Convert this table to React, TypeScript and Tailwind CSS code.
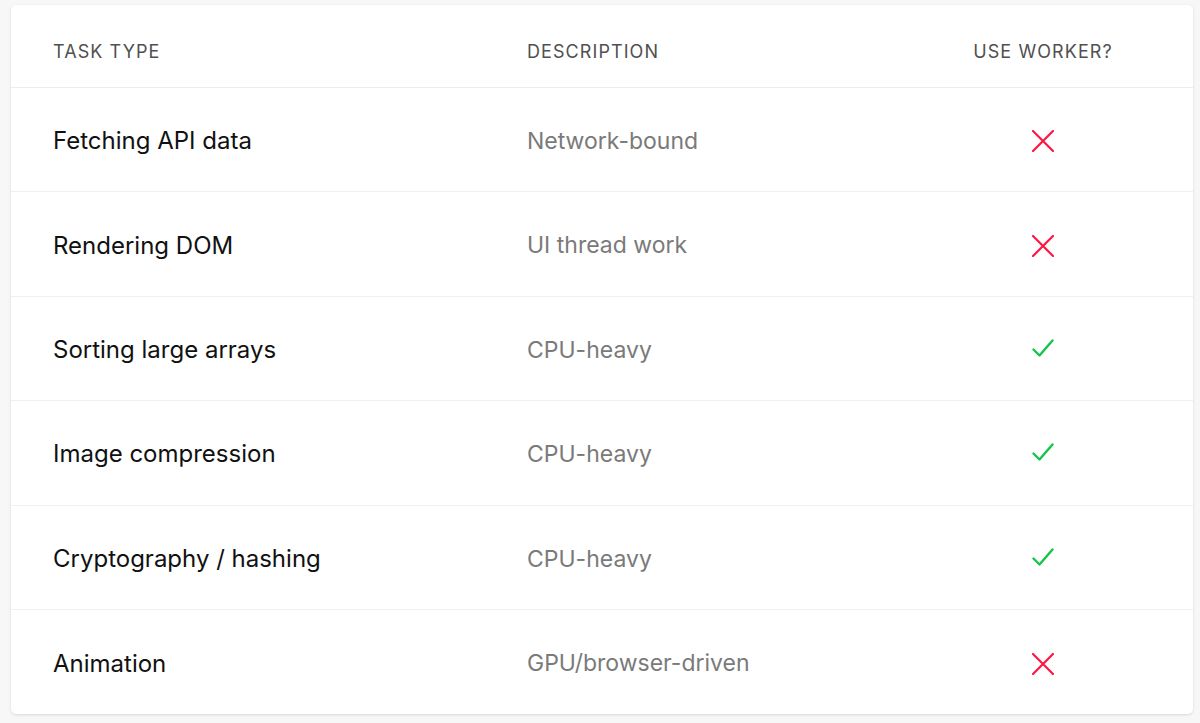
const ROWS = [
  { task: 'Fetching API data', desc: 'Network-bound', ok: false },
  { task: 'Rendering DOM', desc: 'UI thread work', ok: false },
  { task: 'Sorting large arrays', desc: 'CPU-heavy', ok: true },
  { task: 'Image compression', desc: 'CPU-heavy', ok: true },
  { task: 'Cryptography / hashing', desc: 'CPU-heavy', ok: true },
  { task: 'Animation', desc: 'GPU/browser-driven', ok: false },
];

function Cross() {
  return (
    <svg width="22" height="22" viewBox="0 0 22 22" fill="none">
      <path d="M1 1L21 21M21 1L1 21" stroke="#ff1744" strokeWidth="2.2" strokeLinecap="square" />
    </svg>
  );
}

function Check() {
  return (
    <svg width="22" height="22" viewBox="0 0 22 22" fill="none">
      <path d="M1.5 10.5L7.5 16.5L20.5 1.5" stroke="#16c44a" strokeWidth="2.4" strokeLinecap="round" strokeLinejoin="round" />
    </svg>
  );
}

export default function App() {
  return (
    <div className="min-h-[723px] w-[1200px] bg-[#f7f7f7] pt-[5px] pl-[11px]" style={{ fontFamily: 'Inter, "Noto Sans", sans-serif' }}>
      <div className="w-[1182px] overflow-hidden rounded-[5px] bg-white shadow-[0_1px_3px_rgba(0,0,0,0.12)]">
        <div className="grid h-[83px] grid-cols-[474px_445px_142px] items-center pt-[10px] pl-[42px] text-[18px] tracking-[0.06em] text-[#505050] border-b border-[#ececec]">
          <div>TASK TYPE</div>
          <div>DESCRIPTION</div>
          <div className="text-center">USE WORKER?</div>
        </div>
        {ROWS.map((r, i) => (
          <div
            key={r.task}
            className={`grid h-[104.4px] grid-cols-[474px_445px_142px] items-center pl-[42px] pt-[3px] ${i < ROWS.length - 1 ? 'border-b border-[#f0f0f0]' : ''}`}
          >
            <div className="text-[24px] text-[#111]">{r.task}</div>
            <div className="text-[23px] text-[#7a7a7a]">{r.desc}</div>
            <div className="flex justify-center">{r.ok ? <Check /> : <Cross />}</div>
          </div>
        ))}
      </div>
    </div>
  );
}
